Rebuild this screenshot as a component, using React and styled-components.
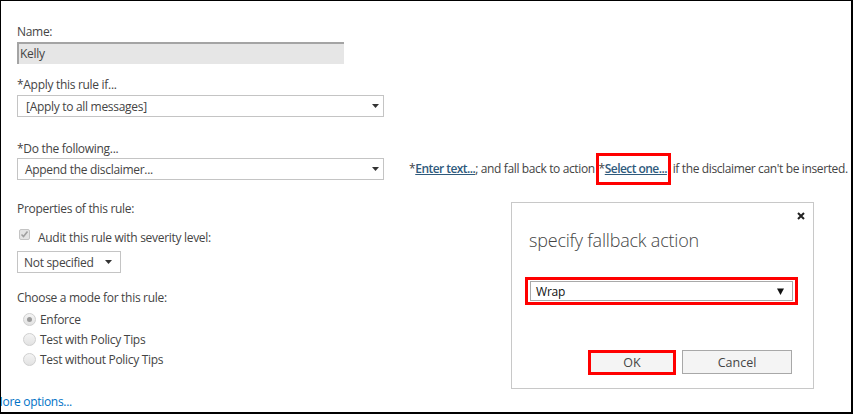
import React from "react";
import styled, { createGlobalStyle } from "styled-components";

const Global = createGlobalStyle`
  html, body { margin: 0; padding: 0; background: #fff; }
  body { overflow: hidden; }
  * { box-sizing: border-box; }
`;

const Frame = styled.div`
  position: relative;
  width: 853px;
  height: 414px;
  background: #fff;
  border-style: solid;
  border-color: #000;
  border-width: 1px 2px 2px 1px;
  overflow: hidden;
  font-family: "Open Sans", "Noto Sans", sans-serif;
  font-size: 12px;
  letter-spacing: -0.3px;
  color: #444;
`;

const Form = styled.div`
  display: flex;
  flex-direction: column;
  align-items: flex-start;
  padding: 23px 0 0 16px;
`;

const Label = styled.div`
  line-height: 16px;
  height: 16px;
  margin-top: ${(p) => p.$mt || 0}px;
  white-space: nowrap;
`;

const NameInput = styled.div`
  width: 327px;
  height: 22px;
  margin-top: 2px;
  background: #e6e6e6;
  border-top: 2px solid #a4a4a4;
  border-left: 2px solid #a4a4a4;
  padding-left: 1px;
  line-height: 19px;
  color: #444;
`;

const SelectBox = styled.div`
  display: flex;
  align-items: center;
  justify-content: space-between;
  width: ${(p) => p.$w}px;
  height: 22px;
  margin-top: ${(p) => p.$mt || 0}px;
  border: 1px solid #c4c4c4;
  background: #fff;
  padding: 0 ${(p) => p.$pr || 4}px 0 ${(p) => p.$pl || 7}px;
  color: #444;
  white-space: nowrap;
`;

const Row = styled.div`
  display: flex;
  align-items: center;
  gap: ${(p) => p.$gap || 0}px;
  margin-top: ${(p) => p.$mt || 0}px;
`;

const Sentence = styled.div`
  white-space: nowrap;
  line-height: 16px;
  letter-spacing: -0.37px;
`;

const Link = styled.span`
  color: #2f5a7c;
  font-weight: 600;
  text-decoration: underline;
  letter-spacing: -0.55px;
`;

const Highlight = styled.span`
  display: inline-block;
  border: 3px solid #f00;
  padding: 5px 1px 5px 0;
  margin: -8px -1px -8px -2px;
  line-height: 16px;
`;

const CheckRow = styled.div`
  display: flex;
  align-items: center;
  gap: 8px;
  height: 16px;
  margin-top: 12px;
  padding-left: 2px;
`;

const RadioRow = styled.div`
  display: flex;
  align-items: center;
  gap: 4px;
  height: 20px;
  padding-left: 6px;
  margin-top: ${(p) => p.$mt || 0}px;
`;

const Radio = styled.span`
  position: relative;
  display: inline-block;
  width: 13px;
  height: 13px;
  border-radius: 50%;
  border: 1px solid #cfcfcf;
  background: linear-gradient(#f4f4f4, #e2e2e2);
  &::after {
    content: "";
    display: ${(p) => (p.$on ? "block" : "none")};
    position: absolute;
    left: 3px;
    top: 3px;
    width: 5px;
    height: 5px;
    border-radius: 50%;
    background: #9a9a9a;
  }
`;

const MoreLink = styled.div`
  color: #0072c6;
  line-height: 16px;
  margin-top: 25px;
  margin-left: -25px;
  white-space: nowrap;
`;

const Dialog = styled.div`
  position: absolute;
  left: 510px;
  top: 201px;
  width: 303px;
  height: 187px;
  background: #fff;
  border: 1px solid #c8c8c8;
  display: flex;
  flex-direction: column;
`;

const DialogHeader = styled.div`
  display: flex;
  justify-content: flex-end;
  padding: 9px 8px 0 0;
  height: 16px;
`;

const Title = styled.div`
  font-size: 18px;
  font-weight: 300;
  letter-spacing: -0.2px;
  line-height: 24px;
  color: #444;
  padding-left: 17px;
  margin-top: 9px;
`;

const RedWrap = styled.div`
  margin: 25px 0 0 13px;
  width: 273px;
  border: 3px solid #f00;
  padding: 1px 2px;
`;

const NativeSelect = styled.div`
  display: flex;
  align-items: center;
  justify-content: space-between;
  height: 20px;
  border: 1px solid #a9a9a9;
  padding: 0 8px 0 5px;
  color: #111;
  letter-spacing: -0.2px;
`;

const Buttons = styled.div`
  display: flex;
  justify-content: flex-end;
  align-items: flex-start;
  gap: 6px;
  margin-top: 45px;
  padding-right: 21px;
`;

const Button = styled.div`
  display: flex;
  align-items: center;
  justify-content: center;
  width: ${(p) => p.$w}px;
  height: ${(p) => (p.$hl ? 25 : 24)}px;
  background: #f4f4f4;
  border: ${(p) => (p.$hl ? "3px solid #f00" : "1px solid #a8a8a8")};
  color: #444;
  font-size: 12.5px;
  letter-spacing: 0;
`;

const Caret = ({ color = "#333" }) => (
  <svg width="7" height="4" viewBox="0 0 7 4">
    <polygon points="0,0 7,0 3.5,4" fill={color} />
  </svg>
);

const SolidArrow = () => (
  <svg width="7" height="7" viewBox="0 0 7 7">
    <polygon points="0,0.5 7,0.5 3.5,7" fill="#111" />
  </svg>
);

const CloseIcon = () => (
  <svg width="8" height="8" viewBox="0 0 8 8">
    <path d="M1 1 L7 7 M7 1 L1 7" stroke="#222" strokeWidth="2" />
  </svg>
);

const CheckIcon = () => (
  <svg width="11" height="11" viewBox="0 0 11 11" style={{ marginTop: -6 }}>
    <rect x="0.5" y="0.5" width="10" height="10" rx="1.5" fill="#e4e4e4" stroke="#c4c4c4" />
    <path d="M2.5 5.5 L4.5 7.5 L8.5 2.5" stroke="#a0a0a0" strokeWidth="1.6" fill="none" />
  </svg>
);

export default function App() {
  return (
    <>
      <Global />
      <Frame>
        <Form>
          <Label>Name:</Label>
          <NameInput>Kelly</NameInput>

          <Label $mt={13}>*Apply this rule if...</Label>
          <SelectBox $w={367} $mt={2} $pl={8}>
            <span>[Apply to all messages]</span>
            <Caret />
          </SelectBox>

          <Label $mt={24}>*Do the following...</Label>
          <Row $gap={25} $mt={1}>
            <SelectBox $w={367} $pl={7}>
              <span>Append the disclaimer...</span>
              <Caret />
            </SelectBox>
            <Sentence>
              *<Link>Enter text...</Link>; and fall back to action{" "}
              <Highlight>
                *<Link>Select one...</Link>
              </Highlight>{" "}
              if the disclaimer can't be inserted.
            </Sentence>
          </Row>

          <Label $mt={21}>Properties of this rule:</Label>
          <CheckRow>
            <CheckIcon />
            <span>Audit this rule with severity level:</span>
          </CheckRow>
          <SelectBox $w={104} $mt={6} $pl={6} $pr={8}>
            <span>Not specified</span>
            <Caret />
          </SelectBox>

          <Label $mt={17}>Choose a mode for this rule:</Label>
          <RadioRow $mt={3}>
            <Radio $on />
            <span>Enforce</span>
          </RadioRow>
          <RadioRow>
            <Radio />
            <span>Test with Policy Tips</span>
          </RadioRow>
          <RadioRow>
            <Radio />
            <span>Test without Policy Tips</span>
          </RadioRow>

          <MoreLink>More options...</MoreLink>
        </Form>

        <Dialog>
          <DialogHeader>
            <CloseIcon />
          </DialogHeader>
          <Title>specify fallback action</Title>
          <RedWrap>
            <NativeSelect>
              <span>Wrap</span>
              <SolidArrow />
            </NativeSelect>
          </RedWrap>
          <Buttons>
            <Button $w={88} $hl>OK</Button>
            <Button $w={110}>Cancel</Button>
          </Buttons>
        </Dialog>
      </Frame>
    </>
  );
}
